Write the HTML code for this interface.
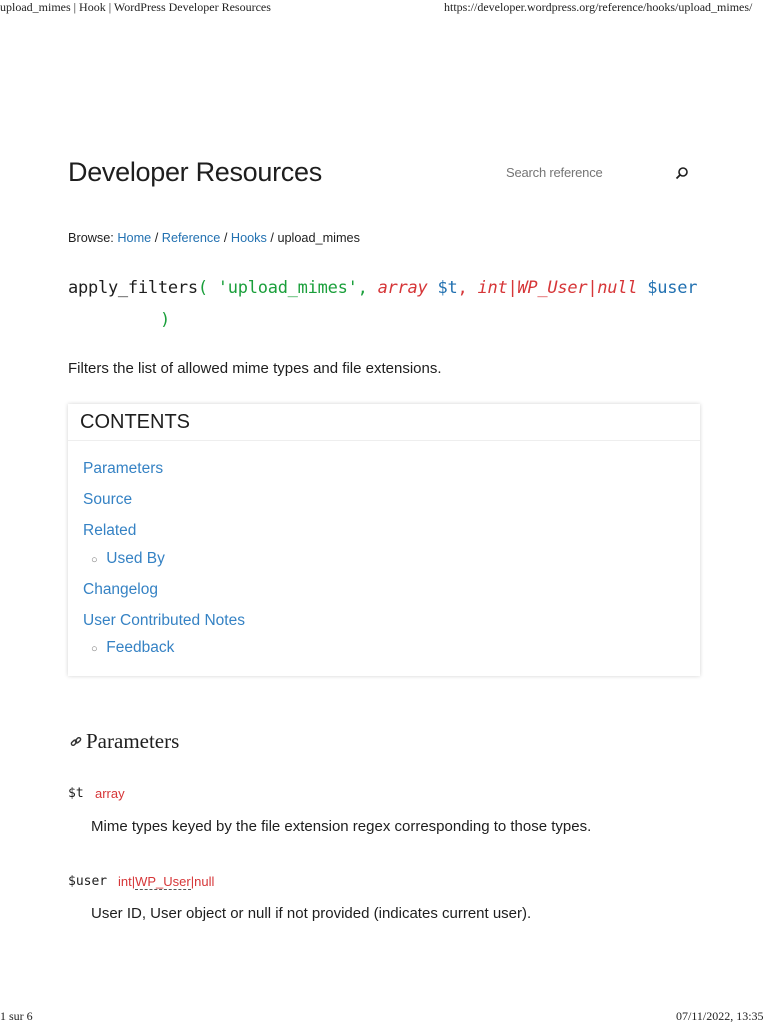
<!DOCTYPE html>
<html><head><meta charset="utf-8"><style>
body{margin:0;width:768px;height:1024px;background:#fff;position:relative;font-family:"Liberation Sans",sans-serif;color:#1e1e1e;overflow:hidden}
.a{position:absolute;white-space:nowrap}
.ser{font-family:"Liberation Serif",serif;font-size:12px;color:#222}
a{color:#2271b1;text-decoration:none}
.mono{font-family:"DejaVu Sans Mono","Liberation Mono",monospace}
.box{position:absolute;left:68px;top:404px;width:632px;height:272px;box-shadow:0 0 4px rgba(0,0,0,.18);background:#fff}
.lk{position:absolute;left:83px;font-size:15.5px;color:#3582c4}
</style></head><body>
<div class="a ser" style="left:0;top:0">upload_mimes | Hook | WordPress Developer Resources</div>
<div class="a ser" style="left:444px;top:0">https://developer.wordpress.org/reference/hooks/upload_mimes/</div>
<div class="a" style="left:68px;top:157px;font-size:27px;color:#1e1e1e;letter-spacing:-0.3px">Developer Resources</div>
<div class="a" style="left:506px;top:165px;font-size:13px;color:#757575;letter-spacing:-0.2px">Search reference</div>
<svg class="a" style="left:675px;top:166px" width="14" height="14" viewBox="0 0 14 14"><circle cx="8" cy="6" r="4" fill="none" stroke="#1e1e1e" stroke-width="1.6"/><path d="M5 9L1.5 12.5" stroke="#1e1e1e" stroke-width="1.8"/></svg>
<div class="a" style="left:68px;top:231px;font-size:12.7px">Browse: <a style="color:#2271b1">Home</a> / <a>Reference</a> / <a>Hooks</a> / upload_mimes</div>
<div class="a mono" style="left:68px;top:278px;font-size:17px;letter-spacing:-0.25px;color:#1e1e1e">apply_filters<span style="color:#1a9f3b">( 'upload_mimes',</span> <i style="color:#d63638">array</i> <span style="color:#2271b1">$t</span><span style="color:#d63638">,</span> <i style="color:#d63638">int|WP_User|null</i> <span style="color:#2271b1">$user</span></div>
<div class="a mono" style="left:160px;top:310px;font-size:17px;color:#1a9f3b">)</div>
<div class="a" style="left:68px;top:360px;font-size:15px">Filters the list of allowed mime types and file extensions.</div>
<div class="box"><div style="height:36px;border-bottom:1px solid #eee;padding-left:12px;font-size:20px;line-height:36px;color:#1e1e1e">CONTENTS</div></div>
<div class="lk a" style="top:460px">Parameters</div>
<div class="lk a" style="top:491px">Source</div>
<div class="lk a" style="top:522px">Related</div>
<div class="lk a" style="top:550px;left:91px"><span style="color:#777;font-size:11px">○</span>&nbsp; Used By</div>
<div class="lk a" style="top:581px">Changelog</div>
<div class="lk a" style="top:612px">User Contributed Notes</div>
<div class="lk a" style="top:639px;left:91px"><span style="color:#777;font-size:11px">○</span>&nbsp; Feedback</div>
<svg class="a" style="left:70px;top:736px" width="12" height="12" viewBox="0 0 12 12"><g fill="none" stroke="#333" stroke-width="1.4"><rect x="1" y="5" width="6" height="3.4" rx="1.7" transform="rotate(-45 4 6.7)"/><rect x="5" y="2.6" width="6" height="3.4" rx="1.7" transform="rotate(-45 8 4.3)"/></g></svg>
<div class="a" style="left:86px;top:729px;font-family:'Liberation Serif',serif;font-size:21px">Parameters</div>
<div class="a mono" style="left:68px;top:786px;font-size:13px">$t</div>
<div class="a" style="left:95px;top:786px;font-size:13px;color:#d63638">array</div>
<div class="a" style="left:91px;top:818px;font-size:15px">Mime types keyed by the file extension regex corresponding to those types.</div>
<div class="a mono" style="left:68px;top:874px;font-size:13px">$user</div>
<div class="a" style="left:118px;top:874px;font-size:13px;color:#d63638">int|<span style="border-bottom:1px dashed #555">WP_User</span>|null</div>
<div class="a" style="left:91px;top:905px;font-size:15px">User ID, User object or null if not provided (indicates current user).</div>
<div class="a ser" style="left:0;top:1009px">1 sur 6</div>
<div class="a ser" style="left:676px;top:1009px">07/11/2022, 13:35</div>
</body></html>
